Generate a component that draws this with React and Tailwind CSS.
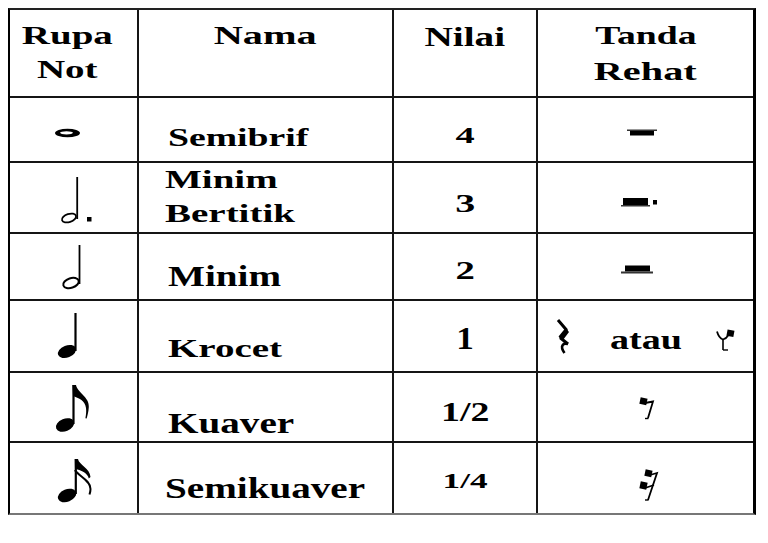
import React from 'react';

const FONT = "font-['Liberation_Serif','Times_New_Roman',serif] font-bold text-black";

function Cell({ className = '', children }) {
  return <div className={`bg-white ${className}`}>{children}</div>;
}

// ---- notes (col 1, drawn in cell coordinates) ----
function Semibrif() {
  return (
    <svg width="127" height="63">
      <ellipse cx="57.5" cy="35" rx="12.5" ry="4.3" fill="black" />
      <ellipse cx="56.5" cy="34.8" rx="6.5" ry="1.6" fill="white" />
    </svg>
  );
}

function MinimBertitik() {
  return (
    <svg width="127" height="69">
      <ellipse cx="59" cy="55" rx="7.3" ry="4" transform="rotate(-18 59 55)" fill="none" stroke="black" strokeWidth="1.8" />
      <line x1="67.2" y1="14" x2="67.2" y2="56" stroke="black" strokeWidth="1.8" />
      <rect x="77" y="54" width="4.5" height="4.5" fill="black" />
    </svg>
  );
}

function Minim() {
  return (
    <svg width="127" height="65">
      <ellipse cx="61" cy="49" rx="8" ry="4.8" transform="rotate(-18 61 49)" fill="none" stroke="black" strokeWidth="2" />
      <line x1="69.5" y1="11" x2="69.5" y2="50" stroke="black" strokeWidth="1.8" />
    </svg>
  );
}

function Krocet() {
  return (
    <svg width="127" height="70">
      <ellipse cx="57" cy="50.5" rx="9.5" ry="6" transform="rotate(-22 57 50.5)" fill="black" />
      <line x1="65.5" y1="12" x2="65.5" y2="50" stroke="black" strokeWidth="2.2" />
    </svg>
  );
}

function Kuaver() {
  return (
    <svg width="127" height="68">
      <ellipse cx="55" cy="52" rx="9.5" ry="6.3" transform="rotate(-22 55 52)" fill="black" />
      <line x1="63.5" y1="12" x2="63.5" y2="51" stroke="black" strokeWidth="2.2" />
      <path d="M62.5 12 L66 12 C67 19 79.5 24 78.8 34 C78.5 39 77.6 42 76.6 45.5 L75.4 45.2 C76.2 41 76.4 38 76 35 C75 28 70 25.5 63 23 Z" fill="black" />
    </svg>
  );
}

function Semikuaver() {
  return (
    <svg width="127" height="70">
      <ellipse cx="57" cy="52.5" rx="9.5" ry="6.3" transform="rotate(-22 57 52.5)" fill="black" />
      <line x1="65.8" y1="16" x2="65.8" y2="51" stroke="black" strokeWidth="2.2" />
      <path d="M64.8 16 L68 16 C69 22 80 25 80.5 34 L78.8 35.5 C77.5 30 72 27.5 65 26 Z" fill="black" />
      <path d="M65 27 C68 33 80.5 37 80.5 46 C80.5 48 80 50 79.5 51.5" fill="none" stroke="black" strokeWidth="2" />
    </svg>
  );
}

// ---- rests (col 4, drawn in cell coordinates) ----
function RestSemibrif() {
  return (
    <svg width="215" height="63">
      <rect x="89" y="31.5" width="30" height="1.5" fill="#333" />
      <rect x="92" y="33" width="24" height="4.5" fill="black" />
    </svg>
  );
}

function RestMinimBertitik() {
  return (
    <svg width="215" height="69">
      <rect x="85" y="35" width="25" height="7" fill="black" />
      <rect x="83" y="42" width="29" height="1.5" fill="#333" />
      <rect x="115" y="37" width="4" height="4.5" fill="black" />
    </svg>
  );
}

function RestMinim() {
  return (
    <svg width="215" height="65">
      <rect x="87" y="31.5" width="25" height="6" fill="black" />
      <rect x="83" y="37.5" width="32" height="2" fill="#333" />
    </svg>
  );
}

function RestKrocetA() {
  return (
    <svg width="40" height="70">
      <path d="M20 19 L28.5 29 L22.5 37 L30 43" fill="none" stroke="black" strokeWidth="3" strokeLinejoin="bevel" />
      <path d="M27.5 27 L20.5 35.5 L25 39 L31 31 Z" fill="black" />
      <path d="M30 43 C25 41.5 21.5 45 26.5 52" fill="none" stroke="black" strokeWidth="2.6" />
    </svg>
  );
}

function RestKrocetB() {
  return (
    <svg width="60" height="70">
      <path d="M35 30.5 C36 34 38 37.5 41 38.5 C43 38 45 36.5 46.5 34" fill="none" stroke="black" strokeWidth="1.8" />
      <rect x="45" y="29" width="7" height="6.5" fill="black" transform="rotate(10 48.5 32)" />
      <line x1="41" y1="38" x2="41" y2="49" stroke="black" strokeWidth="1.6" />
      <line x1="41" y1="49" x2="46" y2="49" stroke="black" strokeWidth="1.4" />
    </svg>
  );
}

function RestKuaver() {
  return (
    <svg width="215" height="68">
      <rect x="102" y="25" width="7" height="6.5" fill="black" transform="rotate(12 105.5 28)" />
      <path d="M107 30 L115 28.5 L110 45" fill="none" stroke="black" strokeWidth="1.8" />
      <line x1="107" y1="45.5" x2="110.5" y2="45.5" stroke="black" strokeWidth="1.4" />
    </svg>
  );
}

function RestSemikuaver() {
  return (
    <svg width="215" height="70">
      <rect x="107" y="27" width="7" height="6.5" fill="black" transform="rotate(12 110.5 30)" />
      <rect x="102" y="39" width="7" height="7" fill="black" transform="rotate(12 105.5 42.5)" />
      <path d="M112 32 L119 30 L110 57" fill="none" stroke="black" strokeWidth="1.8" />
      <path d="M107 45 L116 42" fill="none" stroke="black" strokeWidth="1.8" />
      <line x1="107" y1="57" x2="110.5" y2="57" stroke="black" strokeWidth="1.4" />
    </svg>
  );
}

export default function App() {
  return (
    <div className={`w-[768px] h-[543px] bg-white pl-[8px] pt-[8px] ${FONT}`}>
      <div className="grid w-max grid-cols-[127px_253px_142px_215px] grid-rows-[86px_63px_69px_65px_70px_68px_70px] gap-[2px] bg-[#151515] border-t-2 border-l-2 border-r-[3px] border-b-2 border-t-[#222] border-l-black border-r-black border-b-[#777]">
        {/* header */}
        <Cell className="flex flex-col items-center pt-[9px] pr-[12px]">
          <span className="inline-block scale-x-150 text-[26px] leading-[34px]">Rupa</span>
          <span className="inline-block scale-x-150 text-[26px] leading-[34px]">Not</span>
        </Cell>
        <Cell className="flex justify-center pt-[9px]">
          <span className="inline-block scale-x-[1.55] text-[26px] leading-[34px]">Nama</span>
        </Cell>
        <Cell className="flex justify-center pt-[13px]">
          <span className="inline-block scale-x-[1.4] text-[28px] leading-none">Nilai</span>
        </Cell>
        <Cell className="flex flex-col items-center pt-[8px]">
          <span className="inline-block scale-x-[1.45] text-[26px] leading-[36px]">Tanda</span>
          <span className="inline-block scale-x-[1.55] text-[26px] leading-[36px]">Rehat</span>
        </Cell>

        {/* semibrif */}
        <Cell><Semibrif /></Cell>
        <Cell className="pl-[29px] pt-[27px]">
          <span className="inline-block origin-left scale-x-[1.45] text-[26px] leading-none">Semibrif</span>
        </Cell>
        <Cell className="flex justify-center pt-[25px]">
          <span className="inline-block scale-x-[1.6] text-[24px] leading-none">4</span>
        </Cell>
        <Cell><RestSemibrif /></Cell>

        {/* minim bertitik */}
        <Cell><MinimBertitik /></Cell>
        <Cell className="flex flex-col items-start pl-[26px]">
          <span className="inline-block origin-left scale-x-[1.5] text-[26px] leading-[34px]">Minim</span>
          <span className="inline-block origin-left scale-x-[1.5] text-[26px] leading-[34px]">Bertitik</span>
        </Cell>
        <Cell className="flex justify-center pt-[28px]">
          <span className="inline-block scale-x-[1.6] text-[25px] leading-none">3</span>
        </Cell>
        <Cell><RestMinimBertitik /></Cell>

        {/* minim */}
        <Cell><Minim /></Cell>
        <Cell className="pl-[29px] pt-[28px]">
          <span className="inline-block origin-left scale-x-[1.35] text-[29px] leading-none">Minim</span>
        </Cell>
        <Cell className="flex justify-center pt-[24px]">
          <span className="inline-block scale-x-[1.55] text-[25px] leading-none">2</span>
        </Cell>
        <Cell><RestMinim /></Cell>

        {/* krocet */}
        <Cell><Krocet /></Cell>
        <Cell className="pl-[29px] pt-[35px]">
          <span className="inline-block origin-left scale-x-150 text-[26px] leading-none">Krocet</span>
        </Cell>
        <Cell className="flex justify-center pt-[21px]">
          <span className="inline-block scale-x-[1.1] text-[32px] leading-none">1</span>
        </Cell>
        <Cell className="flex items-start">
          <RestKrocetA />
          <div className="ml-[32px] w-[72px] pt-[25px]">
            <span className="inline-block origin-left scale-x-[1.36] text-[28px] leading-none">atau</span>
          </div>
          <RestKrocetB />
        </Cell>

        {/* kuaver */}
        <Cell><Kuaver /></Cell>
        <Cell className="pl-[29px] pt-[36px]">
          <span className="inline-block origin-left scale-x-[1.35] text-[29px] leading-none">Kuaver</span>
        </Cell>
        <Cell className="flex justify-center pt-[26px]">
          <span className="inline-block scale-x-[1.4] text-[27px] leading-none">1/2</span>
        </Cell>
        <Cell><RestKuaver /></Cell>

        {/* semikuaver */}
        <Cell><Semikuaver /></Cell>
        <Cell className="pl-[26px] pt-[31px]">
          <span className="inline-block origin-left scale-x-[1.35] text-[29px] leading-none">Semikuaver</span>
        </Cell>
        <Cell className="flex justify-center pt-[27px]">
          <span className="inline-block scale-x-[1.6] text-[22px] leading-none">1/4</span>
        </Cell>
        <Cell><RestSemikuaver /></Cell>
      </div>
    </div>
  );
}
